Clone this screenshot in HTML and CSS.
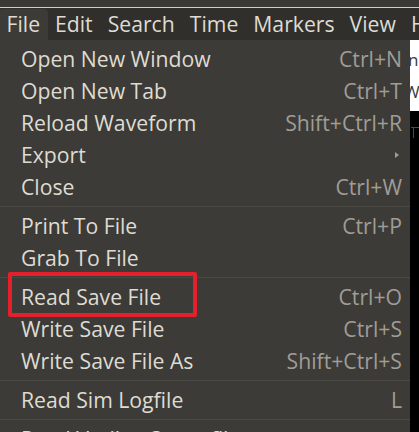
FILE: index.html
```html
<!DOCTYPE html>
<html>
<head>
<meta charset="utf-8">
<link rel="stylesheet" href="styles.css">
</head>
<body>
<div class="screen">
  <div class="titlestrip"></div>
  <div class="titleline"></div>
  <div class="menubar">
    <span class="mb-item active">File</span>
    <span class="mb-item">Edit</span>
    <span class="mb-item">Search</span>
    <span class="mb-item">Time</span>
    <span class="mb-item">Markers</span>
    <span class="mb-item">View</span>
    <span class="mb-item">Help</span>
  </div>
  <div class="content">
    <div class="menu">
      <div class="item"><span class="label">Open New Window</span><span class="accel">Ctrl+N</span></div>
      <div class="item"><span class="label">Open New Tab</span><span class="accel">Ctrl+T</span></div>
      <div class="item"><span class="label">Reload Waveform</span><span class="accel">Shift+Ctrl+R</span></div>
      <div class="item"><span class="label">Export</span><span class="arrow"></span></div>
      <div class="item"><span class="label">Close</span><span class="accel">Ctrl+W</span></div>
      <div class="sep"></div>
      <div class="item"><span class="label">Print To File</span><span class="accel">Ctrl+P</span></div>
      <div class="item"><span class="label">Grab To File</span><span class="accel"></span></div>
      <div class="sep"></div>
      <div class="item"><span class="label">Read Save File</span><span class="accel">Ctrl+O</span></div>
      <div class="item"><span class="label">Write Save File</span><span class="accel">Ctrl+S</span></div>
      <div class="item"><span class="label">Write Save File As</span><span class="accel">Shift+Ctrl+S</span></div>
      <div class="sep"></div>
      <div class="item"><span class="label">Read Sim Logfile</span><span class="accel">L</span></div>
      <div class="sep"></div>
      <div class="item"><span class="label">Read Verilog Stemsfile</span><span class="accel"></span></div>
    </div>
    <div class="side">
      <div class="side-white">
        <div class="side-line l1">n:</div>
        <div class="side-line l2">Wa</div>
      </div>
      <div class="side-black">
        <svg class="marker" width="9" height="14" viewBox="0 0 9 14"><path d="M1 1.5H9M3.5 1.5V12" stroke="#3a3ad0" stroke-width="1" fill="none"/></svg>
      </div>
    </div>
  </div>
  <div class="highlight-box"></div>
</div>
</body>
</html>
```
FILE: styles.css
```css
html, body {
  margin: 0;
  padding: 0;
  background: #3c3b37;
}
.screen {
  position: relative;
  width: 419px;
  height: 432px;
  overflow: hidden;
  font-family: "Open Sans", "Noto Sans", sans-serif;
  font-size: 21.2px;
  color: #dfdbd2;
}
.titlestrip {
  height: 7px;
  background: #3a3935;
}
.titleline {
  height: 1px;
  background: #cfcfcc;
}
.menubar {
  height: 32px;
  background: #302f2c;
  display: flex;
  align-items: flex-end;
  white-space: nowrap;
  overflow: hidden;
  margin-left: -1px;
}
.mb-item {
  height: 31px;
  line-height: 30px;
  padding: 0 7.5px;
  color: #dfdbd2;
  flex: none;
}
.mb-item.active {
  background: #3c3b37;
  border-radius: 4px 4px 0 0;
}
.content {
  display: flex;
  height: 392px;
}
.menu {
  width: 410px;
  flex: none;
  background: #3c3b37;
  padding-top: 3px;
  box-sizing: border-box;
}
.item {
  height: 32px;
  display: flex;
  align-items: center;
  justify-content: space-between;
  padding: 0 8px 0 21px;
  white-space: nowrap;
}
.label {
  line-height: 32px;
}
.accel {
  color: #a09d96;
  line-height: 32px;
}
.arrow {
  width: 0;
  height: 0;
  border-top: 3px solid transparent;
  border-bottom: 3px solid transparent;
  border-left: 4px solid #a09d96;
  margin-right: 3px;
}
.sep {
  height: 7px;
  display: flex;
  align-items: center;
}
.sep::before {
  content: "";
  display: block;
  width: 100%;
  height: 1px;
  background: #4a4944;
}
.side {
  flex: 1;
  display: flex;
  flex-direction: column;
  overflow: hidden;
}
.side-white {
  height: 71px;
  background: #ffffff;
  overflow: hidden;
  font-size: 17px;
  color: #3c3c3c;
}
.side-line {
  white-space: nowrap;
  line-height: 32px;
}
.l1 {
  margin-left: -2px;
  margin-top: 4px;
}
.l2 {
  margin-left: -6px;
}
.side-black {
  flex: 1;
  background: #000000;
  padding-top: 15px;
}
.marker {
  display: block;
}
.highlight-box {
  position: absolute;
  left: 8px;
  top: 272px;
  width: 181px;
  height: 37px;
  border: 4px solid #e3202b;
  border-radius: 2px;
}
```
